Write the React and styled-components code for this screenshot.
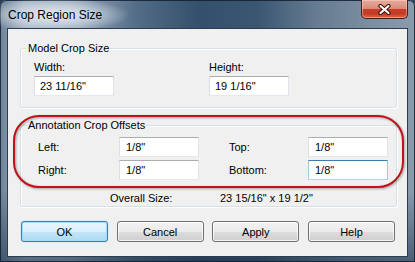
import React from 'react';
import styled, { createGlobalStyle } from 'styled-components';

const GlobalStyle = createGlobalStyle`
  html, body { margin: 0; padding: 0; background: #2a4058; }
  body { font-family: "Liberation Sans", Arial, sans-serif; }
`;

const Window = styled.div`
  width: 415px;
  height: 262px;
  box-sizing: border-box;
  display: flex;
  flex-direction: column;
  padding: 0 7px 5px;
  border-radius: 6px 6px 0 0;
  overflow: hidden;
  background:
    linear-gradient(180deg, rgba(0, 0, 0, 0) 0px, rgba(0, 0, 0, 0) 190px, rgba(25, 45, 70, 0.55) 262px),
    linear-gradient(90deg, #6c8399 0%, #a4b3c2 6%, #97a8b9 18%, #526c86 33%, #35506c 48%, #3b5671 62%, #657b91 76%, #7a8da0 88%, #8a9bad 100%);
  box-shadow: inset 0 0 0 1px rgba(18, 32, 48, 0.85);
`;

const TitleBar = styled.div`
  height: 28px;
  flex: none;
  display: flex;
  justify-content: space-between;
  align-items: flex-start;
  margin: 0 -7px;
  padding: 0 7px 0 8px;
  background: radial-gradient(ellipse 75px 17px at 55px 15px, rgba(240, 244, 248, 0.92) 0%, rgba(220, 228, 236, 0.6) 55%, rgba(200, 210, 220, 0) 100%);
`;

const Title = styled.div`
  padding-top: 8px;
  font-size: 12px;
  line-height: 15px;
  color: #000;
`;

const CloseButton = styled.div`
  width: 47px;
  height: 19px;
  box-sizing: border-box;
  display: flex;
  align-items: center;
  justify-content: center;
  border: 1px solid #4a1a16;
  border-top: none;
  border-radius: 0 0 5px 5px;
  background: linear-gradient(180deg, #e8ab9c 0%, #d98a7a 48%, #c3402a 52%, #c63a24 75%, #de6446 100%);
  box-shadow: inset 0 0 0 1px rgba(255, 220, 210, 0.45);
`;

const ClientFrame = styled.div`
  flex: 1;
  border: 1px solid #2c3d50;
  display: flex;
`;

const Client = styled.div`
  flex: 1;
  position: relative;
  background: #f0f0f0;
  padding: 19px 10px 0 12px;
  display: flex;
  flex-direction: column;
  font-size: 11px;
  color: #000;
`;

const Group = styled.div`
  position: relative;
  border: 1px solid #d5dfe5;
  border-radius: 3px;
  box-shadow: inset 1px 1px 0 #fff, 1px 1px 0 #fff;
  margin-top: ${p => p.$gap || 0}px;
  padding: ${p => p.$pad};
`;

const Legend = styled.span`
  position: absolute;
  top: -7px;
  left: 6px;
  padding: 0 1px;
  line-height: 13px;
  background: #f0f0f0;
`;

const ModelGrid = styled.div`
  display: grid;
  grid-template-columns: 175px 175px;
`;

const StackedField = styled.div`
  display: flex;
  flex-direction: column;
  gap: 2px;
`;

const Label = styled.span`
  line-height: 13px;
  align-self: ${p => p.$center ? 'center' : 'auto'};
`;

const TextBox = styled.input`
  width: 80px;
  height: 20px;
  box-sizing: border-box;
  margin: 0;
  padding: 0 0 0 ${p => p.$indent || 5}px;
  font: 11px "Liberation Sans", Arial, sans-serif;
  color: #000;
  background: #fff;
  border: 1px solid;
  border-color: ${p => p.$focused ? '#3d7bad #a4c9e3 #b7d9ed #a4c9e3' : '#abadb3 #e2e3ea #e3e9ef #dbdfe6'};
  outline: none;
  border-radius: 0;
`;

const OffsetGrid = styled.div`
  display: grid;
  grid-template-columns: 81px 110px 79px 80px;
  row-gap: 3px;
`;

const OverallRow = styled.div`
  display: flex;
  margin-top: 12px;
  padding-left: 72px;
  line-height: 13px;
`;

const OverallLabel = styled.span`
  width: 110px;
`;

const ButtonRow = styled.div`
  display: flex;
  justify-content: space-between;
  margin-top: 14px;
  padding: 0 2px 0 1px;
`;

const Button = styled.div`
  width: 87px;
  height: 21px;
  box-sizing: border-box;
  display: flex;
  align-items: center;
  justify-content: center;
  border: 1px solid ${p => p.$default ? '#3c7fb1' : '#707070'};
  border-radius: 3px;
  background: ${p => p.$default
    ? 'linear-gradient(180deg, #e8f5fd 0%, #d9effc 50%, #c2e5f8 50%, #aedaf3 100%)'
    : 'linear-gradient(180deg, #f2f2f2 0%, #ebebeb 50%, #dddddd 50%, #cfcfcf 100%)'};
  box-shadow: ${p => p.$default
    ? 'inset 0 0 0 1px rgba(160, 220, 250, 0.9), 0 0 1px rgba(60, 127, 177, 0.6)'
    : 'inset 0 0 0 1px rgba(255, 255, 255, 0.75)'};
  font-size: 11px;
  color: #000;
`;

const Highlight = styled.div`
  position: absolute;
  left: 5px;
  top: 86px;
  width: 391px;
  height: 73px;
  box-sizing: border-box;
  border: 2px solid #c1121c;
  border-radius: 26px;
  pointer-events: none;
  filter: drop-shadow(1px 1px 1px rgba(0, 0, 0, 0.35));
`;

function CloseGlyph() {
  return (
    <svg width="13" height="11" viewBox="0 0 13 11">
      <path d="M2.5 2 L10.5 9 M10.5 2 L2.5 9" stroke="#3a0d08" strokeWidth="4.2" strokeLinecap="round" fill="none" />
      <path d="M2.5 2 L10.5 9 M10.5 2 L2.5 9" stroke="#ffffff" strokeWidth="2.2" strokeLinecap="round" fill="none" />
    </svg>
  );
}

export default function App() {
  return (
    <>
      <GlobalStyle />
      <Window>
        <TitleBar>
          <Title>Crop Region Size</Title>
          <CloseButton><CloseGlyph /></CloseButton>
        </TitleBar>
        <ClientFrame>
          <Client>
            <Group $pad="12px 0 11px 13px">
              <Legend>Model Crop Size</Legend>
              <ModelGrid>
                <StackedField>
                  <Label>Width:</Label>
                  <TextBox readOnly value={'23 11/16"'} />
                </StackedField>
                <StackedField>
                  <Label>Height:</Label>
                  <TextBox readOnly value={'19 1/16"'} />
                </StackedField>
              </ModelGrid>
            </Group>
            <Group $gap={17} $pad="11px 0 1px 17px">
              <Legend>Annotation Crop Offsets</Legend>
              <OffsetGrid>
                <Label $center>Left:</Label>
                <TextBox $indent={6} readOnly value={'1/8"'} />
                <Label $center>Top:</Label>
                <TextBox $indent={6} readOnly value={'1/8"'} />
                <Label $center>Right:</Label>
                <TextBox $indent={6} readOnly value={'1/8"'} />
                <Label $center>Bottom:</Label>
                <TextBox $indent={6} $focused readOnly value={'1/8"'} />
              </OffsetGrid>
              <OverallRow>
                <OverallLabel>Overall Size:</OverallLabel>
                <span>23 15/16" x 19 1/2"</span>
              </OverallRow>
            </Group>
            <ButtonRow>
              <Button $default>OK</Button>
              <Button>Cancel</Button>
              <Button>Apply</Button>
              <Button>Help</Button>
            </ButtonRow>
            <Highlight />
          </Client>
        </ClientFrame>
      </Window>
    </>
  );
}
